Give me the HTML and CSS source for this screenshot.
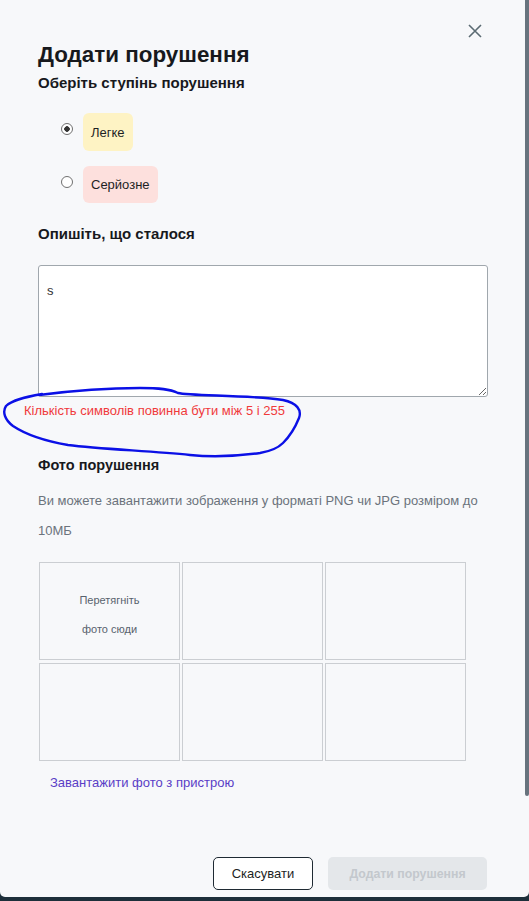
FILE: index.html
```html
<!DOCTYPE html>
<html lang="uk">
<head>
<meta charset="utf-8">
<title>Додати порушення</title>
<link rel="stylesheet" href="styles.css">
</head>
<body>
<div class="modal">
  <button class="close" aria-label="Закрити">
    <svg width="14" height="14" viewBox="0 0 14 14"><path d="M1 1 L13 13 M13 1 L1 13" stroke="#5b6b73" stroke-width="1.6" fill="none"/></svg>
  </button>
  <h1 class="title">Додати порушення</h1>
  <h2 class="subtitle">Оберіть ступінь порушення</h2>
  <div class="radios">
    <label class="radio-row"><input type="radio" name="lvl" checked><span class="chip chip-light">Легке</span></label>
    <label class="radio-row"><input type="radio" name="lvl"><span class="chip chip-serious">Серйозне</span></label>
  </div>
  <h2 class="label">Опишіть, що сталося</h2>
  <textarea class="textarea">s</textarea>
  <p class="error">Кількість символів повинна бути між 5 і 255</p>
  <h2 class="label photo-label">Фото порушення</h2>
  <p class="hint">Ви можете завантажити зображення у форматі PNG чи JPG розміром до 10МБ</p>
  <div class="grid">
    <div class="cell cell-drop"><span>Перетягніть</span><span>фото сюди</span></div>
    <div class="cell"></div>
    <div class="cell"></div>
    <div class="cell"></div>
    <div class="cell"></div>
    <div class="cell"></div>
  </div>
  <a class="upload" href="#">Завантажити фото з пристрою</a>
  <div class="footer">
    <button class="btn btn-cancel">Скасувати</button>
    <button class="btn btn-submit" disabled>Додати порушення</button>
  </div>
  <div class="scroll-thumb"></div>
  <svg class="scribble" width="529" height="901" viewBox="0 0 529 901">
    <path d="M 39 395 C 70 391, 110 388, 140 388 C 160 388, 170 389, 178 393 C 190 396, 250 395, 283 400 C 297 403, 302 410, 299 418 C 295 428, 290 436, 283 443 C 276 450, 266 452, 260 453 C 238 456, 210 457, 190 455 C 150 451, 100 449, 68 445 C 45 441, 25 434, 13 426 C 5 420, 2 412, 6 406 C 12 400, 25 397, 42 394" stroke="#0b10e6" stroke-width="2.4" fill="none" stroke-linecap="round"/>
  </svg>
</div>
</body>
</html>
```
FILE: styles.css
```css
* { box-sizing: border-box; }
html, body { margin: 0; padding: 0; }
body {
  background: #1d2f3a;
  font-family: "Liberation Sans", Arial, sans-serif;
  color: #17191d;
}
.modal {
  position: relative;
  width: 529px;
  height: 897px;
  background: #f7f8fa;
  border-radius: 0 0 5px 5px;
  padding: 42px 42px 7px 38px;
  display: flex;
  flex-direction: column;
  align-items: flex-start;
}
.close {
  position: absolute;
  top: 24px;
  left: 468px;
  padding: 0;
  border: 0;
  background: none;
  width: 14px;
  height: 14px;
  display: flex;
}
.title {
  margin: 0;
  font-size: 22.4px;
  line-height: 26px;
  font-weight: 700;
}
.subtitle, .label {
  margin: 6px 0 0;
  font-size: 15px;
  line-height: 18px;
  font-weight: 700;
}
.radios {
  margin-top: 21px;
  padding-left: 23px;
  display: flex;
  flex-direction: column;
  gap: 15px;
}
.radio-row {
  display: flex;
  align-items: center;
  gap: 10px;
}
.radio-row input {
  appearance: none;
  -webkit-appearance: none;
  margin: 0 0 6px;
  width: 12px;
  height: 12px;
  border: 1px solid #707070;
  border-radius: 50%;
  background: #fff;
}
.radio-row input:checked {
  background: radial-gradient(circle, #333 0 2.5px, #fff 3px);
}
.chip {
  height: 38px;
  padding: 0 8px;
  border-radius: 6px;
  display: flex;
  align-items: center;
  font-size: 13px;
  color: #1d1f24;
}
.chip-light { background: #fef3c4; }
.chip-serious { background: #fde0dd; height: 37px; }
.label { margin-top: 22px; }
.textarea {
  display: block;
  margin-top: 22px;
  width: 450px;
  height: 132px;
  border: 1px solid #a0a7ad;
  border-radius: 3px;
  background: #fff;
  padding: 17px 8px 9px;
  font-family: "Liberation Sans", Arial, sans-serif;
  font-size: 13px;
  line-height: 16px;
  color: #333;
  resize: vertical;
}
.error {
  margin: 6px 0 0 -14px;
  font-size: 13px;
  line-height: 16px;
  color: #f03a3a;
}
.photo-label { margin-top: 37px; font-size: 14.5px; }
.hint {
  margin: 12px 0 0;
  font-size: 13px;
  line-height: 30px;
  color: #6b737c;
  width: 450px;
}
.grid {
  margin: 16px 0 0 1px;
  display: grid;
  grid-template-columns: repeat(3, 141px);
  grid-auto-rows: 98px;
  column-gap: 2px;
  row-gap: 3px;
}
.cell {
  border: 1px solid #cbced2;
}
.cell-drop {
  display: flex;
  flex-direction: column;
  align-items: center;
  justify-content: center;
  gap: 17px;
  font-size: 11px;
  color: #58626d;
  padding-top: 6px;
}
.upload {
  margin: 14px 0 0 12px;
  font-size: 13px;
  line-height: 16px;
  color: #5a3ec6;
  text-decoration: none;
}
.footer {
  margin-top: auto;
  align-self: stretch;
  display: flex;
  justify-content: flex-end;
  gap: 15px;
}
.btn {
  height: 33px;
  border-radius: 5px;
  font-family: "Liberation Sans", Arial, sans-serif;
  font-size: 13px;
}
.btn-cancel {
  width: 100px;
  background: #fff;
  border: 1px solid #1f2a33;
  color: #1d1f24;
}
.btn-submit {
  width: 159px;
  background: #e4e7ea;
  border: 0;
  color: #c3c8cd;
  font-weight: 700;
  font-size: 12.3px;
}
.scroll-thumb {
  position: absolute;
  top: 0;
  right: 0;
  width: 4px;
  height: 796px;
  background: #67737d;
  border-radius: 0 0 3px 3px;
}
.scribble {
  position: absolute;
  left: 0;
  top: 0;
  pointer-events: none;
}
```
